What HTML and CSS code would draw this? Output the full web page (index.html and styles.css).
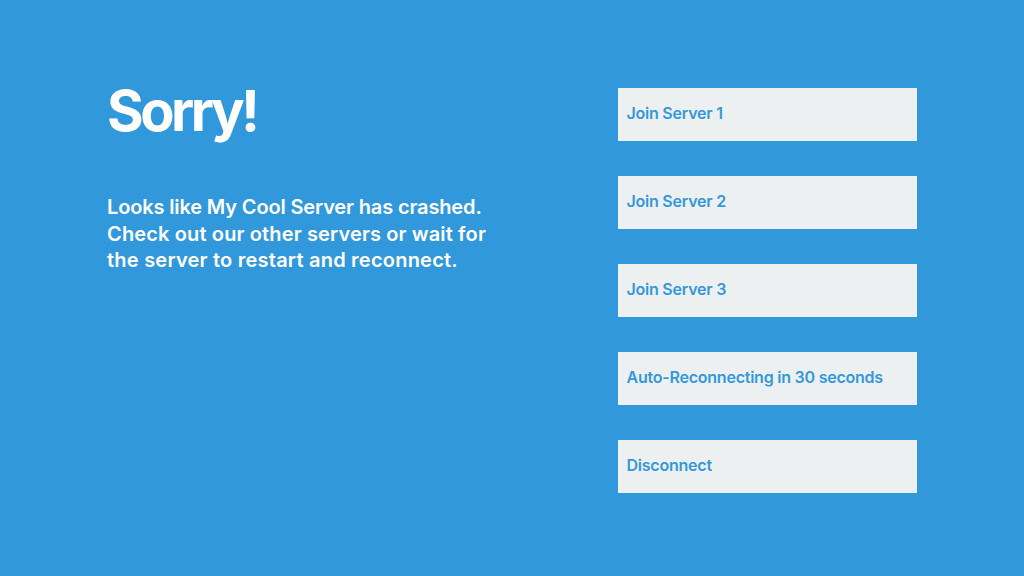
FILE: index.html
```
<!DOCTYPE html>
<html lang="en">
<head>
<meta charset="utf-8">
<title>Sorry!</title>
<link rel="stylesheet" href="styles.css">
</head>
<body>
<main class="screen">
  <section class="message">
    <h1 class="title">Sorry!</h1>
    <p class="text">
      <span class="line line-first">Looks like My Cool Server has crashed.</span>
      <span class="line line-second">Check out our other servers or wait for</span>
      <span class="line line-third">the server to restart and reconnect.</span>
    </p>
  </section>
  <nav class="actions">
    <div class="button">Join Server 1</div>
    <div class="button">Join Server 2</div>
    <div class="button">Join Server 3</div>
    <div class="button">Auto-Reconnecting in 30 seconds</div>
    <div class="button">Disconnect</div>
  </nav>
</main>
</body>
</html>
```
FILE: styles.css
```
html, body { margin: 0; padding: 0; }
body { width: 1024px; height: 576px; overflow: hidden; background: #3298dc; font-family: "Inter", "Liberation Sans", sans-serif; }
.screen { display: flex; justify-content: space-between; height: 576px; box-sizing: border-box; padding: 88px 107px 0 107px; }
.message { width: 400px; }
.title { margin: -10px 0 0; font-size: 56px; line-height: 66px; font-weight: 700; color: #fff; letter-spacing: -3.5px; }
.text { margin: 50px 0 0; font-size: 20px; line-height: 26.5px; font-weight: 600; color: #fff; }
.line { display: block; white-space: nowrap; }
.line-first { letter-spacing: -0.14px; }
.line-second { letter-spacing: 0.14px; }
.line-third { letter-spacing: 0.23px; }
.actions { display: flex; flex-direction: column; gap: 35px; width: 299px; }
.button { height: 53px; display: flex; align-items: center; box-sizing: border-box; padding: 0 0 4px 8.5px; background: #ecf0f1; color: #3498db; font-size: 16px; font-weight: 600; letter-spacing: -0.23px; }
```
